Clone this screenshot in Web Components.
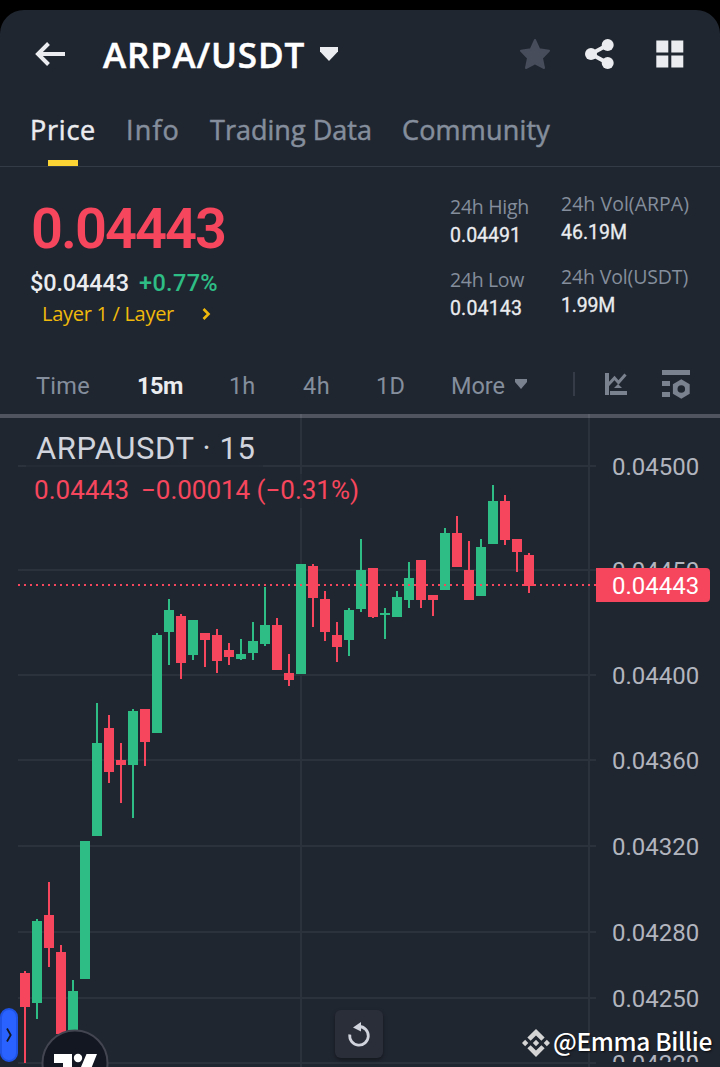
<!DOCTYPE html>
<html lang="en">
<head>
<meta charset="UTF-8">
<title>ARPA/USDT</title>
<style>
    body {
        margin: 0;
        background: #000;
        font-family: "Open Sans", "Noto Sans", sans-serif;
        color: #eaecef;
    }
</style>
</head>
<body>
<app-shell>
    <pair-header pair="ARPA/USDT"></pair-header>
    <tab-bar>
        <fit-text width="66" class="active">Price</fit-text>
        <fit-text width="54">Info</fit-text>
        <fit-text width="162">Trading Data</fit-text>
        <fit-text width="148">Community</fit-text>
    </tab-bar>
    <price-summary>
        <stat-item slot="left" label="24h High" label-width="79" value="0.04491" value-width="71"></stat-item>
        <stat-item slot="left" label="24h Low" label-width="74" value="0.04143" value-width="72"></stat-item>
        <stat-item slot="right" label="24h Vol(ARPA)" label-width="128" value="46.19M" value-width="66"></stat-item>
        <stat-item slot="right" label="24h Vol(USDT)" label-width="127" value="1.99M" value-width="54"></stat-item>
    </price-summary>
    <interval-bar></interval-bar>
    <candle-chart></candle-chart>
</app-shell>

<script>
class BaseElement extends HTMLElement {
    constructor() {
        super();
        this.attachShadow({ mode: "open" });
    }
    connectedCallback() {
        const template = document.createElement('template');
        template.innerHTML = `<style>${this.getStyles()}</style>${this.getTemplate()}`;
        this.shadowRoot.append(template.content.cloneNode(true));
    }
}

// Text that spreads its letters to fill the given width
class FitText extends BaseElement {
    getStyles() {
        return `
            :host { display: block; flex: none; white-space: nowrap; }
            span { display: inline-block; }
        `;
    }
    getTemplate() {
        return `<span><slot></slot></span>`;
    }
    connectedCallback() {
        super.connectedCallback();
        const width = Number(this.getAttribute('width'));
        const span = this.shadowRoot.querySelector('span');
        const count = this.textContent.length;
        const natural = span.getBoundingClientRect().width;
        span.style.letterSpacing = (width - natural) / count + 'px';
        this.style.width = width + 'px';
    }
}

class AppShell extends BaseElement {
    getStyles() {
        return `
            :host {
                display: flex;
                flex-direction: column;
                box-sizing: border-box;
                width: 720px;
                height: 1067px;
                padding-top: 10px;
                overflow: hidden;
            }
            main {
                display: flex;
                flex-direction: column;
                flex: 1;
                background: #202630;
                border-radius: 24px 24px 0 0;
                overflow: hidden;
            }
        `;
    }
    getTemplate() {
        return `<main><slot></slot></main>`;
    }
}

class PairHeader extends BaseElement {
    getStyles() {
        return `
            :host { display: flex; align-items: center; height: 88px; padding: 0 36px 0 35px; }
            svg { display: block; flex: none; fill: #eaecef; }
            .title { margin: 2px 0 0 38px; font-size: 35px; font-weight: 600; line-height: 88px; color: #fff; -webkit-text-stroke: .5px; }
            .caret { margin-left: 15px; }
            .actions { display: flex; align-items: center; gap: 35px; margin-left: auto; }
            .star { fill: #474d5b; }
        `;
    }
    getTemplate() {
        return `
            <svg width="30" height="24" viewBox="0 0 30 24">
                <path d="M13.5 1.5 3 12l10.500 10.500M3 12h27" fill="none" stroke="#eaecef" stroke-width="4"/>
            </svg>
            <fit-text class="title" width="202">${this.getAttribute('pair')}</fit-text>
            <svg class="caret" width="18" height="14" viewBox="0 0 18 14"><path d="M0 0h18v4.500L9 14 0 4.500z"/></svg>
            <div class="actions">
                <svg class="star" width="30" height="30" viewBox="0 0 30 30">
                    <path stroke="#474d5b" stroke-width="2" stroke-linejoin="round" d="m15 1 4.200 9.200L29 11.700l-7 7.300 2 10-9-4.700L6 29l2-10-7-7.300 9.800-1.500z"/>
                </svg>
                <svg width="29" height="30" viewBox="0 0 29 30">
                    <path d="M22.500 6 6 15l16.500 9" fill="none" stroke="#eaecef" stroke-width="4"/>
                    <circle cx="6" cy="15" r="6"/><circle cx="22.700" cy="6" r="6"/><circle cx="22.700" cy="24" r="6"/>
                </svg>
                <svg width="35" height="28" viewBox="-7 0 35 28">
                    <path d="M.3.500h12v12H.3zM15.300.500h12v12h-12zM.3 15.500h12v12H.3zM15.300 15.500h12v12h-12z"/>
                </svg>
            </div>
        `;
    }
}

class TabBar extends BaseElement {
    getStyles() {
        return `
            :host {
                display: flex;
                gap: 30px;
                height: 68px;
                padding-left: 30px;
                border-bottom: 1px solid #333b47;
                font-size: 27px;
                font-weight: 500;
                line-height: 64px;
                color: #848e9c;
                -webkit-text-stroke: .5px;
            }
            ::slotted(.active) {
                color: #eaecef;
                background: linear-gradient(#fcd535, #fcd535) 18px 100% / 30px 6px no-repeat;
            }
        `;
    }
    getTemplate() {
        return `<slot></slot>`;
    }
}

class StatItem extends BaseElement {
    getStyles() {
        return `
            :host { display: block; height: 72.500px; }
            .label { font-size: 19.500px; line-height: 28px; color: #848e9c; }
            .value { font: 400 19.500px/29px Roboto, sans-serif; color: #eaecef; -webkit-text-stroke: .3px; }
        `;
    }
    getTemplate() {
        const a = name => this.getAttribute(name);
        return `
            <fit-text class="label" width="${a('label-width')}">${a('label')}</fit-text>
            <fit-text class="value" width="${a('value-width')}">${a('value')}</fit-text>
        `;
    }
}

class PriceSummary extends BaseElement {
    getStyles() {
        return `
            :host { display: flex; height: 183px; }
            .main { width: 419px; padding: 32px 0 0 31px; }
            .price { font: 600 56px/60px Roboto, sans-serif; color: #f6465d; }
            .row { display: flex; align-items: center; gap: 10px; font: 500 23.500px/32px Roboto, sans-serif; margin: 8px 0 0 -1px; }
            .up { color: #2ebd85; }
            .tag { display: flex; align-items: center; gap: 28px; margin-left: 11px; font-size: 20px; line-height: 30px; color: #f0b90b; }
            .left { width: 111px; padding-top: 26px; }
            .right { padding-top: 23px; }
        `;
    }
    getTemplate() {
        return `
            <div class="main">
                <fit-text class="price" width="194">0.04443</fit-text>
                <div class="row">
                    <fit-text width="99">$0.04443</fit-text>
                    <fit-text class="up" width="79">+0.77%</fit-text>
                </div>
                <div class="tag">
                    <fit-text width="132">Layer 1 / Layer</fit-text>
                    <svg width="9" height="12" viewBox="0 0 9 12"><path d="m1.500 1 5 5-5 5" fill="none" stroke="#f0b90b" stroke-width="2.600"/></svg>
                </div>
            </div>
            <div class="left"><slot name="left"></slot></div>
            <div class="right"><slot name="right"></slot></div>
        `;
    }
}

class IntervalBar extends BaseElement {
    getStyles() {
        return `
            :host {
                display: flex;
                align-items: center;
                height: 64px;
                padding-left: 36px;
                font: 400 23.500px/70px Roboto, sans-serif;
                color: #848e9c;
            }
            svg { display: block; flex: none; fill: #7b828f; }
            .active { color: #eaecef; font-weight: 700; }
            .items { display: flex; height: 70px; margin-top: 8px; }
            .line { width: 2px; height: 24px; margin: 4px 30px 0 46px; background: #363c47; }
        `;
    }
    getTemplate() {
        return `
            <div class="items">
                <fit-text width="54">Time</fit-text>
                <fit-text class="active" width="46" style="margin-left:47px">15m</fit-text>
                <fit-text width="26" style="margin-left:46px">1h</fit-text>
                <fit-text width="27" style="margin-left:48px">4h</fit-text>
                <fit-text width="29" style="margin-left:46px">1D</fit-text>
                <fit-text width="54" style="margin-left:46px">More</fit-text>
            </div>
            <svg style="margin:3px 0 0 10px" width="12" height="10" viewBox="0 0 12 10"><path d="M0 0h12v3L6 10 0 3z"/></svg>
            <div class="line"></div>
            <svg style="margin-top:4px" width="22" height="22" viewBox="0 0 22 22">
                <path d="M0 0h4v22H0zM5 18h17v4H5zM13 11l4 4H9z"/>
                <path d="m3 12 6.500-7 4 4.500 7-8" fill="none" stroke="#7b828f" stroke-width="3"/>
            </svg>
            <svg style="margin:5px 0 0 35px" width="28" height="29" viewBox="0 0 28 29">
                <path fill-rule="evenodd" d="M0 0h28v5H0zM0 11h8v5H0zM0 22h8v5H0zM19.300 9.300l8.400 4.900v9.600l-8.400 5-8.400-5v-9.600zM19.300 15.200a3.800 3.800 0 1 0 0 7.600 3.800 3.800 0 0 0 0-7.600z"/>
            </svg>
        `;
    }
}

// body top, body bottom, wick top, wick bottom, is up
const CANDLES = [
    [973, 1007, 971, 1063, 0], [921, 1003, 919, 1019, 1], [915, 948, 882, 967, 0],
    [952, 1034, 945, 1034, 0], [991, 1040, 980, 1040, 1], [841, 979, 841, 979, 1],
    [743, 836, 703, 836, 1], [728, 772, 715, 783, 0], [760, 765, 743, 803, 0],
    [711, 765, 709, 818, 1], [709, 742, 709, 766, 0], [635, 733, 633, 733, 1],
    [610, 632, 599, 665, 1], [616, 663, 614, 679, 0], [620, 655, 620, 660, 1],
    [633, 640, 633, 667, 0], [635, 661, 629, 673, 0], [650, 657, 643, 665, 0],
    [654, 659, 639, 660, 1], [641, 653, 622, 660, 1], [625, 644, 587, 646, 1],
    [625, 670, 618, 670, 0], [673, 680, 654, 686, 0], [564, 674, 564, 674, 1],
    [566, 598, 564, 627, 0], [599, 632, 591, 641, 0], [635, 647, 622, 662, 0],
    [610, 640, 608, 656, 1], [570, 609, 539, 612, 1], [568, 617, 568, 618, 0],
    [613, 615, 608, 639, 1], [597, 617, 591, 617, 1], [578, 600, 562, 608, 1],
    [560, 600, 560, 608, 0], [595, 600, 595, 616, 0], [533, 590, 528, 590, 1],
    [533, 567, 516, 567, 0], [570, 600, 541, 600, 0], [547, 596, 539, 596, 1],
    [501, 544, 485, 544, 1], [501, 540, 495, 545, 0], [539, 552, 539, 572, 0],
    [555, 586, 553, 593, 0]
];

const LEVELS = [
    [466, '0.04500'], [570, '0.04450'], [675, '0.04400'], [760, '0.04360'],
    [846, '0.04320'], [932, '0.04280'], [998, '0.04250'], [1063, '0.04220']
];

class CandleChart extends BaseElement {
    getStyles() {
        return `
            :host { display: block; position: relative; height: 653px; }
            svg { display: block; }
            .plot text { font-family: Roboto, sans-serif; }
            .axis { font-size: 24px; fill: #b2b5be; }
            .handle {
                position: absolute; left: 0; top: 594px;
                box-sizing: border-box; width: 18px; height: 54px;
                display: flex; align-items: center; justify-content: center;
                border: 2px solid #1e53e5; border-radius: 9px; background: #2962ff;
            }
            .reset {
                position: absolute; left: 335px; top: 596px;
                width: 48px; height: 48px; border-radius: 6px;
                background: #2a2e39; box-shadow: 0 2px 4px rgba(0, 0, 0, .4);
            }
            .logo { position: absolute; left: 41px; top: 615px; }
            .credit {
                position: absolute; left: 522px; top: 607px;
                display: flex; align-items: center; gap: 3px;
                font: 500 24.500px/40px "Noto Sans CJK SC", sans-serif;
                color: #fff; text-shadow: 1px 1px 2px rgba(0, 0, 0, .7);
            }
            .credit svg { margin-top: 4px; }
        `;
    }
    getCandles() {
        return CANDLES.map(([top, bottom, high, low, up], i) => {
            const x = 20 + i * 12;
            return `<path fill="${up ? '#2ebd85' : '#f6465d'}" d="M${x} ${top}h10V${bottom}H${x}zM${x + 4} ${high}h2V${low}h-2z"/>`;
        }).join('');
    }
    getTemplate() {
        return `
            <svg class="plot" width="720" height="653" viewBox="0 414 720 653">
                <clipPath id="axis"><rect x="596" y="418" width="124" height="644"/></clipPath>
                <rect y="414" width="720" height="4" fill="#50545f"/>
                <g fill="#2c323c">
                    ${LEVELS.map(([y]) => `<rect x="18" y="${y - 1}" width="578" height="2"/>`).join('')}
                    <rect x="300" y="418" width="2" height="649"/>
                    <rect x="588" y="418" width="2" height="649"/>
                </g>
                <rect x="300" y="414" width="2" height="4" fill="#5a5e68"/>
                <rect x="588" y="414" width="2" height="4" fill="#5a5e68"/>
                <g fill="#202630" opacity=".5">
                    <rect x="26" y="430" width="237" height="38"/>
                    <rect x="26" y="474" width="338" height="34"/>
                </g>
                ${this.getCandles()}
                <path d="M18 585h578" stroke="#f6465d" stroke-width="2" stroke-dasharray="2 4"/>
                <text x="36" y="459" font-size="31" textLength="219" fill="#d1d4dc">ARPAUSDT · 15</text>
                <text x="34" y="499" font-size="26" textLength="95" fill="#f6465d">0.04443</text>
                <text x="141" y="499" font-size="26" textLength="218" fill="#f6465d">−0.00014 (−0.31%)</text>
                <g class="axis" clip-path="url(#axis)">
                    ${LEVELS.map(([y, label]) => `<text x="612" y="${y + 9}">${label}</text>`).join('')}
                </g>
                <path d="M596 568h110a4 4 0 0 1 4 4v26a4 4 0 0 1-4 4H596z" fill="#f6465d"/>
                <text x="612" y="594" font-size="24" fill="#fff">0.04443</text>
            </svg>
            <svg class="logo" width="68" height="38" viewBox="0 0 68 38">
                <circle cx="34" cy="34" r="32.500" fill="#131722" stroke="#434651" stroke-width="2"/>
                <path d="M13 25h18v20h-9V34h-9zM45.500 25h10.500l-8 20H37z" fill="#fff"/>
                <circle cx="37" cy="29" r="4.200" fill="#fff"/>
            </svg>
            <div class="handle">
                <svg width="6" height="14" viewBox="0 0 6 14"><path d="m1 .500 3.700 6.500L1 13.500" fill="none" stroke="#131722" stroke-width="1.800"/></svg>
            </div>
            <div class="reset">
                <svg width="48" height="48" viewBox="0 0 48 48">
                    <path d="M14.800 24.500a9.300 9.300 0 1 0 9.300-8" fill="none" stroke="#d1d4dc" stroke-width="2.800"/>
                    <path d="m18 17.500 8-5.500v9.500z" fill="#d1d4dc"/>
                </svg>
            </div>
            <div class="credit">
                <svg width="28" height="28" viewBox="0 0 24 24" fill="#d4d4d4">
                    <path d="m12 0 7.400 7.300-2.800 2.800L12 5.500l-4.600 4.600-2.800-2.800zM2.700 9.300 5.400 12l-2.700 2.700L0 12zM12 9.300l2.700 2.700-2.700 2.700L9.300 12zM21.300 9.300 24 12l-2.700 2.700-2.700-2.700zM7.400 13.900l4.600 4.600 4.600-4.600 2.800 2.700L12 24l-7.400-7.400z"/>
                </svg>
                <fit-text width="159">@Emma Billie</fit-text>
            </div>
        `;
    }
}

customElements.define('app-shell', AppShell);
customElements.define('pair-header', PairHeader);
customElements.define('tab-bar', TabBar);
customElements.define('stat-item', StatItem);
customElements.define('price-summary', PriceSummary);
customElements.define('interval-bar', IntervalBar);
customElements.define('candle-chart', CandleChart);
// last, so that every text is measured with its final font
customElements.define('fit-text', FitText);
</script>
</body>
</html>
